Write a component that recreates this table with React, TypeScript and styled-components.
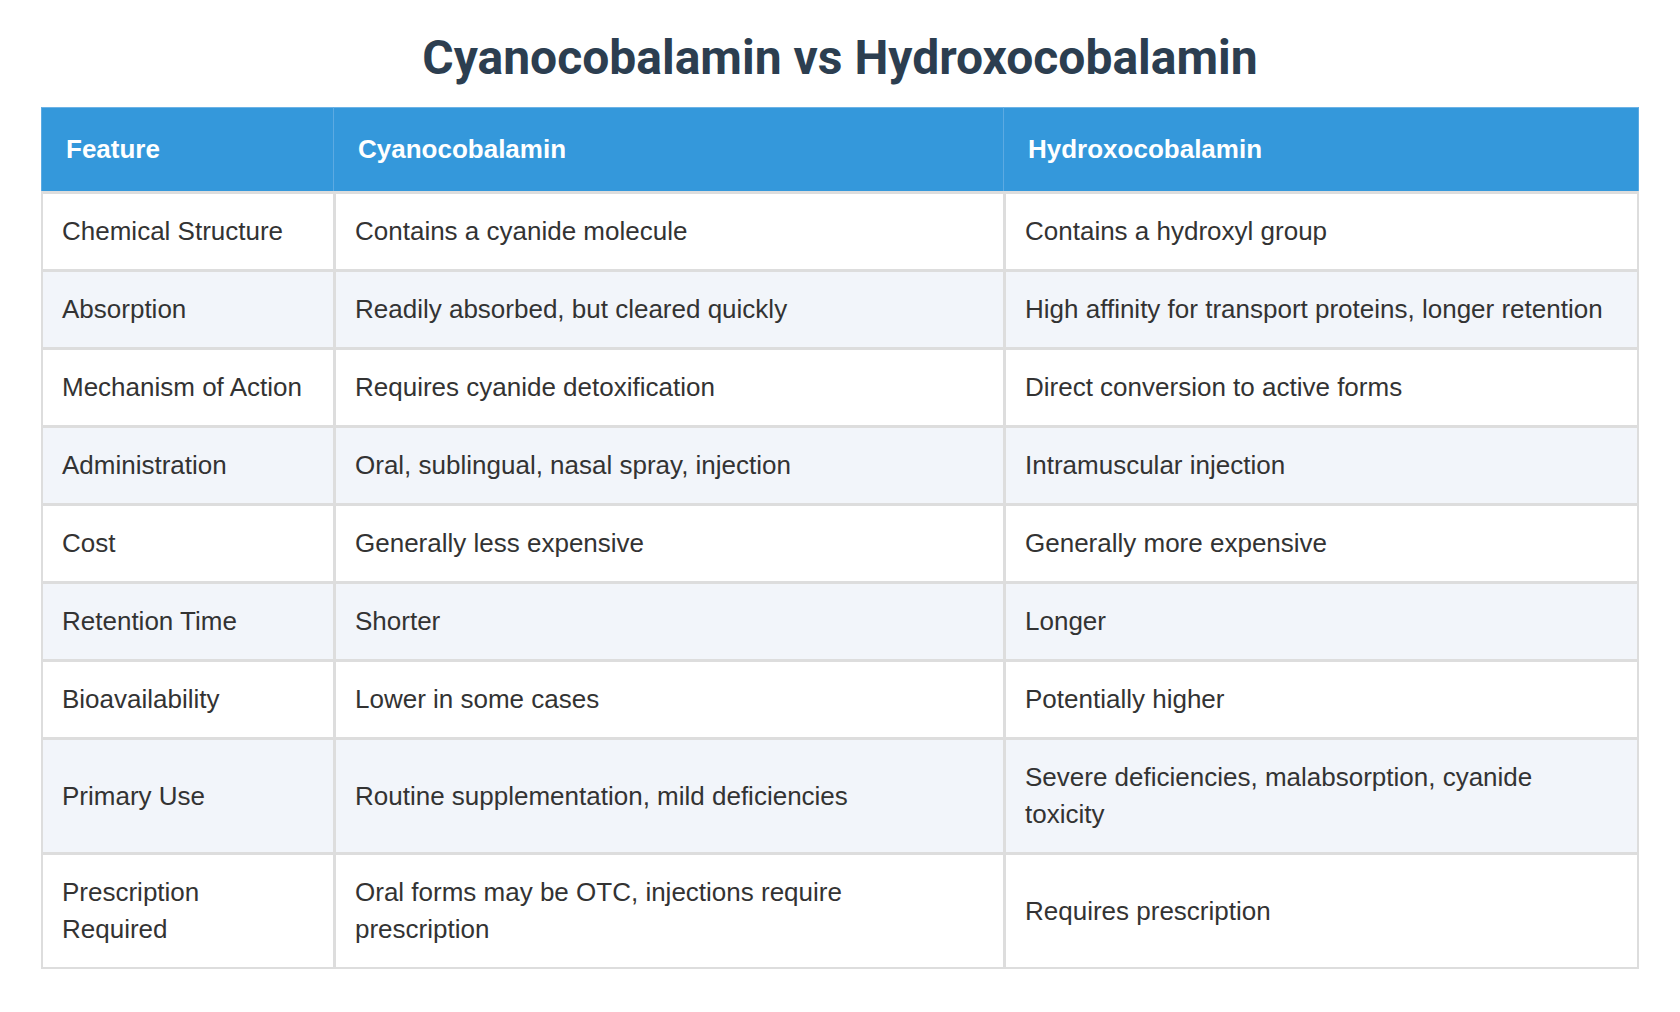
import React from "react";
import styled, { createGlobalStyle } from "styled-components";

const GlobalStyle = createGlobalStyle`
  html, body {
    margin: 0;
    padding: 0;
    background: #ffffff;
  }
  body {
    font-family: "Liberation Sans", Arial, sans-serif;
    color: #333333;
  }
`;

const Page = styled.div`
  padding: 0 41px 40px;
  box-sizing: border-box;
  width: 1680px;
`;

const Title = styled.h1`
  margin: 0;
  height: 107px;
  display: flex;
  align-items: center;
  justify-content: center;
  padding-top: 8px;
  box-sizing: border-box;
  font-family: Roboto, "Liberation Sans", sans-serif;
  font-weight: 700;
  font-size: 48px;
  line-height: 1;
  color: #2c3e50;
`;

const Table = styled.table`
  width: 100%;
  table-layout: fixed;
  border-collapse: separate;
  border-spacing: 0;
  font-size: 26px;
  line-height: 37px;
`;

const HeadCell = styled.th<{ $w: number }>`
  width: ${(p) => p.$w}px;
  box-sizing: border-box;
  background: #3498db;
  color: #ffffff;
  font-weight: 700;
  text-align: left;
  padding: 23px 24px 23px 24px;
  border-top: 1px solid #6db3e6;
  border-left: 1px solid #5caae2;
  &:last-child {
    border-right: 1px solid #5caae2;
  }
`;

const Row = styled.tr<{ $alt: boolean }>`
  background: ${(p) => (p.$alt ? "#f2f5fa" : "#ffffff")};
`;

const Cell = styled.td`
  padding: 19px 26px 19px 19px;
  vertical-align: middle;
  color: #333333;
  border-top: 3px solid #dddddd;
  border-left: 3px solid #dddddd;
  &:first-child {
    border-left-width: 2px;
  }
  &:last-child {
    border-right: 2px solid #dddddd;
  }
  tr:last-child > & {
    border-bottom: 2px solid #dddddd;
  }
`;

const rows: [string, string, string][] = [
  ["Chemical Structure", "Contains a cyanide molecule", "Contains a hydroxyl group"],
  ["Absorption", "Readily absorbed, but cleared quickly", "High affinity for transport proteins, longer retention"],
  ["Mechanism of Action", "Requires cyanide detoxification", "Direct conversion to active forms"],
  ["Administration", "Oral, sublingual, nasal spray, injection", "Intramuscular injection"],
  ["Cost", "Generally less expensive", "Generally more expensive"],
  ["Retention Time", "Shorter", "Longer"],
  ["Bioavailability", "Lower in some cases", "Potentially higher"],
  ["Primary Use", "Routine supplementation, mild deficiencies", "Severe deficiencies, malabsorption, cyanide toxicity"],
  ["Prescription Required", "Oral forms may be OTC, injections require prescription", "Requires prescription"],
];

export default function App() {
  return (
    <>
      <GlobalStyle />
      <Page>
        <Title>Cyanocobalamin vs Hydroxocobalamin</Title>
        <Table>
          <thead>
            <tr>
              <HeadCell $w={292}>Feature</HeadCell>
              <HeadCell $w={670}>Cyanocobalamin</HeadCell>
              <HeadCell $w={636}>Hydroxocobalamin</HeadCell>
            </tr>
          </thead>
          <tbody>
            {rows.map((r, i) => (
              <Row key={r[0]} $alt={i % 2 === 1}>
                <Cell>{r[0]}</Cell>
                <Cell>{r[1]}</Cell>
                <Cell>{r[2]}</Cell>
              </Row>
            ))}
          </tbody>
        </Table>
      </Page>
    </>
  );
}
